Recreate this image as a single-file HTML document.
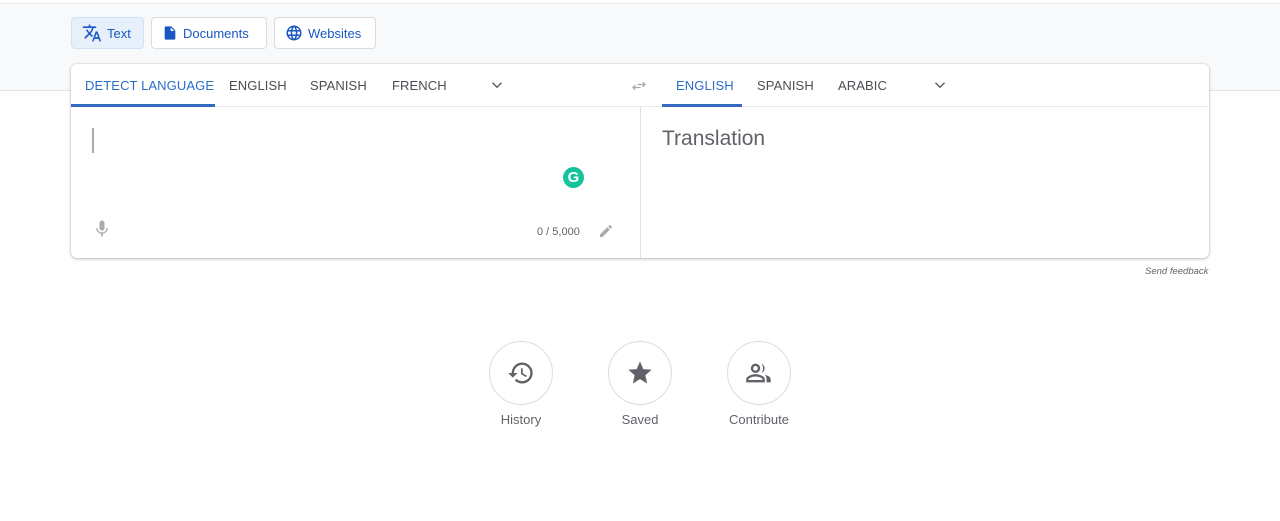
<!DOCTYPE html>
<html><head><style>
*{box-sizing:border-box;margin:0;padding:0}
body{width:1280px;height:521px;background:#fff;font-family:"Liberation Sans",Arial,sans-serif;position:relative;overflow:hidden}
.band{position:absolute;left:0;top:3px;width:1280px;height:88px;background:#f8f9fa;border-top:1px solid #e8e8e8;border-bottom:1px solid #e2e2e2}
.btn{position:absolute;top:17px;height:32px;border:1px solid #dadce0;border-radius:4px;background:#fff;color:#1a57c4;font-size:13px;display:flex;align-items:center;gap:5px;padding-left:10px}
.btn.on{background:#e7effb;border-color:#d2e0f5}
.card{position:absolute;left:71px;top:64px;width:1138px;height:194px;background:#fff;border-radius:6px;box-shadow:0 1px 3px rgba(0,0,0,.25),0 0 0 1px rgba(0,0,0,.04)}
.tabs{position:absolute;left:0;top:0;width:100%;height:43px;border-bottom:1px solid #e8eaed}
.t{position:absolute;top:14px;font-size:13px;color:#4a4d52;letter-spacing:.1px}
.t.a{color:#2a6ec8}
.ul{position:absolute;top:40px;height:3px;background:#3568c0}
.div{position:absolute;left:569px;top:43px;width:1px;height:151px;background:#e0e0e0}
.circ{position:absolute;top:341px;width:64px;height:64px;border:1px solid #dadce0;border-radius:50%;display:flex;align-items:center;justify-content:center}
.lbl{position:absolute;top:412px;font-size:13px;color:#5f6368;width:100px;text-align:center}
</style></head><body>
<div class="band"></div>
<div class="btn on" style="left:71px;width:73px"><svg width="20" height="20" viewBox="0 0 24 24"><path fill="#1a57c4" d="M12.87 15.07l-2.54-2.51.03-.03A17.5 17.5 0 0014.07 6H17V4h-7V2H8v2H1v2h11.17C11.5 7.92 10.44 9.75 9 11.35 8.07 10.32 7.3 9.19 6.69 8h-2c.73 1.63 1.73 3.17 2.98 4.56l-5.09 5.02L4 19l5-5 3.11 3.11.76-2.04zM18.5 10h-2L12 22h2l1.12-3h4.75L21 22h2l-4.5-12zm-2.62 7l1.62-4.33L19.12 17h-3.24z"/></svg>Text</div>
<div class="btn" style="left:151px;width:116px"><svg width="16" height="18" viewBox="0 0 24 24"><path fill="#1a57c4" d="M14 2H6c-1.1 0-2 .9-2 2v16c0 1.1.9 2 2 2h12c1.1 0 2-.9 2-2V8l-6-6zm-1 7V3.5L18.5 9H13z"/></svg>Documents</div>
<div class="btn" style="left:274px;width:102px"><svg width="18" height="18" viewBox="0 0 24 24"><path fill="#1a57c4" d="M12 2a10 10 0 100 20 10 10 0 000-20zm6.9 6h-2.9a15.7 15.7 0 00-1.4-3.6A8 8 0 0118.9 8zM12 4c.8 1.2 1.5 2.5 1.9 4h-3.8c.4-1.4 1.1-2.8 1.9-4zM4.3 14a8.2 8.2 0 010-4h3.4a16.5 16.5 0 000 4H4.3zm.8 2h3c.3 1.3.8 2.5 1.4 3.6A8 8 0 015.1 16zm3-8h-3a8 8 0 014.3-3.6C8.8 5.5 8.4 6.7 8.1 8zM12 20c-.8-1.2-1.5-2.5-1.9-4h3.8c-.4 1.4-1.1 2.8-1.9 4zm2.3-6H9.7a14.7 14.7 0 010-4h4.6a14.7 14.7 0 010 4zm.3 5.6c.6-1.1 1.1-2.300 1.4-3.6h3a8 8 0 01-4.4 3.6zm1.8-5.6a16.5 16.5 0 000-4h3.4a8.2 8.2 0 010 4h-3.4z"/></svg>Websites</div>
<div class="card">
<div class="tabs">
<span class="t a" style="left:14px">DETECT LANGUAGE</span>
<div class="ul" style="left:0;width:144px"></div>
<span class="t" style="left:158px">ENGLISH</span>
<span class="t" style="left:239px">SPANISH</span>
<span class="t" style="left:321px">FRENCH</span>
<svg style="position:absolute;left:417px;top:12px" width="18" height="18" viewBox="0 0 24 24"><path d="M6 9l6 6 6-6" stroke="#5f6368" stroke-width="2" fill="none"/></svg>
<svg style="position:absolute;left:559px;top:13px" width="18" height="18" viewBox="0 0 24 24"><path d="M7 11l-3 3 3 3M4 14h10M17 7l3 3-3 3M20 10H10" stroke="#aaa" stroke-width="1.8" fill="none"/></svg>
<span class="t a" style="left:605px">ENGLISH</span>
<div class="ul" style="left:591px;width:80px"></div>
<span class="t" style="left:686px">SPANISH</span>
<span class="t" style="left:767px">ARABIC</span>
<svg style="position:absolute;left:860px;top:12px" width="18" height="18" viewBox="0 0 24 24"><path d="M6 9l6 6 6-6" stroke="#5f6368" stroke-width="2" fill="none"/></svg>
</div>
<div style="position:absolute;left:21px;top:64px;width:2px;height:25px;background:#aaa"></div>
<div style="position:absolute;left:492px;top:103px;width:21px;height:21px;border-radius:50%;background:#15c39a;color:#fff;font-weight:bold;font-size:15px;text-align:center;line-height:21px">G</div>
<svg style="position:absolute;left:21px;top:155px" width="20" height="20" viewBox="0 0 24 24"><path fill="#aaa" d="M12 14a3 3 0 003-3V5a3 3 0 00-6 0v6a3 3 0 003 3zm5.3-3c0 3-2.5 5.1-5.3 5.1S6.7 14 6.7 11H5c0 3.4 2.7 6.2 6 6.7V21h2v-3.3c3.3-.5 6-3.3 6-6.7h-1.700z"/></svg>
<span style="position:absolute;left:466px;top:162px;font-size:11px;color:#5f6368">0 / 5,000</span>
<svg style="position:absolute;left:527px;top:159px" width="16" height="16" viewBox="0 0 24 24"><path fill="#aaa" d="M3 17.25V21h3.75L17.81 9.94l-3.75-3.75L3 17.25zM20.71 7.04a1 1 0 000-1.41l-2.34-2.34a1 1 0 00-1.41 0l-1.83 1.830 3.75 3.75 1.83-1.83z"/></svg>
<div class="div"></div>
<span style="position:absolute;left:591px;top:63px;font-size:21px;color:#5f6368">Translation</span>
</div>
<span style="position:absolute;left:1145px;top:266px;font-size:9.5px;font-style:italic;color:#5f6368">Send feedback</span>
<div class="circ" style="left:489px"><svg width="28" height="28" viewBox="0 0 24 24"><path fill="#5f6368" d="M13 3a9 9 0 00-9 9H1l3.89 3.89.07.14L9 12H6c0-3.87 3.13-7 7-7s7 3.13 7 7-3.13 7-7 7c-1.93 0-3.68-.79-4.94-2.06l-1.42 1.42A8.95 8.95 0 0013 21a9 9 0 000-18zm-1 5v5l4.28 2.54.72-1.21-3.5-2.08V8H12z"/></svg></div>
<div class="circ" style="left:608px"><svg width="28" height="28" viewBox="0 0 24 24"><path fill="#5f6368" d="M12 17.27L18.18 21l-1.64-7.03L22 9.24l-7.190-.61L12 2 9.19 8.63 2 9.24l5.46 4.73L5.82 21z"/></svg></div>
<div class="circ" style="left:727px"><svg width="28" height="28" viewBox="0 0 24 24"><circle cx="9" cy="8" r="3" fill="none" stroke="#5f6368" stroke-width="2"/><path d="M2 19v-1.5c0-2 4-3.5 7-3.5s7 1.5 7 3.5V19z" fill="none" stroke="#5f6368" stroke-width="2"/><path fill="#5f6368" d="M14 4.2a4 4 0 010 7.6 5.5 5.5 0 000-7.6zM17 13.5c2.5.7 5 1.8 5 3.8V20h-3.5v-2.5c0-1.6-.6-3-1.5-4z"/></svg></div>
<div class="lbl" style="left:471px">History</div>
<div class="lbl" style="left:590px">Saved</div>
<div class="lbl" style="left:709px">Contribute</div>
</body></html>
